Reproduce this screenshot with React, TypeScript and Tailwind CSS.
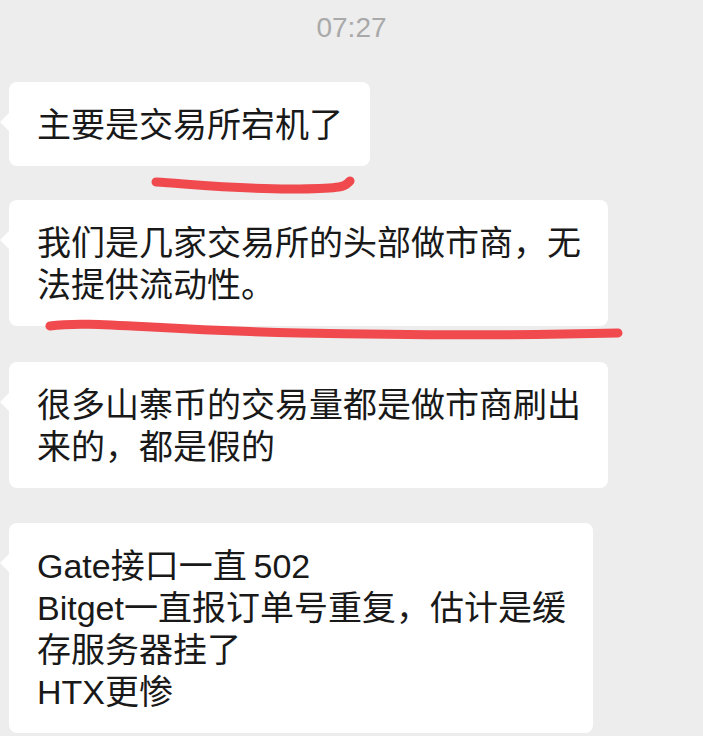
const MESSAGES: string[][] = [
  ["主要是交易所宕机了"],
  ["我们是几家交易所的头部做市商，无", "法提供流动性。"],
  ["很多山寨币的交易量都是做市商刷出", "来的，都是假的"],
  ["Gate接口一直\u2009502", "Bitget一直报订单号重复，估计是缓", "存服务器挂了", "HTX更惨"],
];

const GAPS = ["mt-[38px]", "mt-[34px]", "mt-[36px]", "mt-[35px]"];

const Bubble = ({ lines, gap }: { lines: string[]; gap: string }) => {
  return (
    <div className={`relative ml-[9px] w-fit rounded-lg bg-white pl-[28px] pr-[27px] pt-[22px] pb-[20px] ${gap}`}>
      <div className="absolute -left-[9px] top-[31px] h-0 w-0 border-y-[9px] border-r-[9px] border-y-transparent border-r-white" />
      {lines.map((line, i) => (
        <div key={i} className="h-[42px] whitespace-nowrap text-[34px] leading-[42px] text-[#191919]">
          {line}
        </div>
      ))}
    </div>
  );
};

const App = () => {
  return (
    <div
      className="relative h-[736px] w-full overflow-hidden bg-[#ededed]"
      style={{ fontFamily: '"Liberation Sans", "Noto Sans CJK SC", sans-serif' }}
    >
      <div className="pt-[12px] text-center text-[28px] leading-[32px] text-[#a9a9a9]">
        07:27
      </div>

      {MESSAGES.map((lines, i) => (
        <Bubble key={i} lines={lines} gap={GAPS[i]} />
      ))}

      {/* red marker strokes drawn over the chat */}
      <svg className="pointer-events-none absolute left-0 top-0" width="703" height="736">
        <path
          d="M156 182 C200 185, 250 190, 300 189 S344 186, 350 181"
          stroke="#f04a4f"
          strokeWidth="9"
          strokeLinecap="round"
          fill="none"
        />
        <path
          d="M50 326 C90 320, 150 330, 300 333 S540 335, 618 333"
          stroke="#f04a4f"
          strokeWidth="9"
          strokeLinecap="round"
          fill="none"
        />
      </svg>
    </div>
  );
};

export default App;
